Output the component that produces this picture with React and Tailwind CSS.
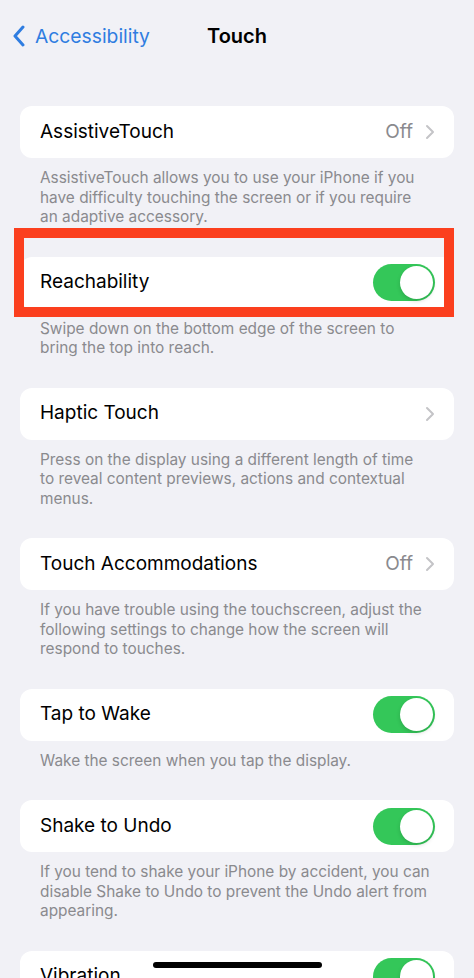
import React from "react";

// footers keep the same line breaks as the device renders them
const sections = [
  {
    title: "AssistiveTouch",
    value: "Off",
    chevron: true,
    footer: [
      "AssistiveTouch allows you to use your iPhone if you",
      "have difficulty touching the screen or if you require",
      "an adaptive accessory.",
    ],
  },
  {
    title: "Reachability",
    toggle: true,
    footer: ["Swipe down on the bottom edge of the screen to", "bring the top into reach."],
  },
  {
    title: "Haptic Touch",
    chevron: true,
    footer: [
      "Press on the display using a different length of time",
      "to reveal content previews, actions and contextual",
      "menus.",
    ],
  },
  {
    title: "Touch Accommodations",
    value: "Off",
    chevron: true,
    footer: [
      "If you have trouble using the touchscreen, adjust the",
      "following settings to change how the screen will",
      "respond to touches.",
    ],
  },
  {
    title: "Tap to Wake",
    toggle: true,
    footer: ["Wake the screen when you tap the display."],
  },
  {
    title: "Shake to Undo",
    toggle: true,
    footer: [
      "If you tend to shake your iPhone by accident, you can",
      "disable Shake to Undo to prevent the Undo alert from",
      "appearing.",
    ],
  },
  {
    title: "Vibration",
    toggle: true,
    footer: [],
  },
];

const Chevron = () => (
  <svg width="10" height="16" viewBox="0 0 10 16" fill="none" className="ml-[12px]">
    <polyline points="2,2 8,8 2,14" stroke="#c4c4c7" strokeWidth="2" strokeLinecap="round" strokeLinejoin="round" />
  </svg>
);

const Toggle = () => (
  <div className="w-[62px] h-[37px] rounded-full bg-[#34c759] flex items-center justify-end p-[2px]">
    <div className="w-[33px] h-[33px] rounded-full bg-white shadow-[0_2px_4px_rgba(0,0,0,0.15)]" />
  </div>
);

const Row = ({ s }) => (
  <div className="mx-[20px] h-[52px] rounded-[12px] bg-white flex items-center pl-[20px] pr-[19px]">
    <span className="flex-1 text-[19px] text-black">{s.title}</span>
    {s.value && <span className="text-[19px] text-[#8a8a8e]">{s.value}</span>}
    {s.chevron && <Chevron />}
    {s.toggle && <Toggle />}
  </div>
);

export default function App() {
  return (
    <div
      className="relative w-[474px] h-[978px] overflow-hidden bg-[#f1f1f6]"
      style={{ fontFamily: "Inter, 'Liberation Sans', sans-serif" }}
    >
      {/* nav bar */}
      <div className="relative h-[74px] flex items-center">
        <div className="flex items-center pl-[12px] pb-[2px]">
          <svg width="14" height="22" viewBox="0 0 14 22" fill="none">
            <polyline points="11,2 3,11 11,20" stroke="#2f7de1" strokeWidth="3" strokeLinecap="round" strokeLinejoin="round" />
          </svg>
          <span className="ml-[9px] text-[19.3px] text-[#2f7de1]">Accessibility</span>
        </div>
        <div className="absolute inset-x-0 text-center text-[20px] font-semibold text-black pointer-events-none pb-[2px]">
          Touch
        </div>
      </div>

      <div className="pt-[32px]">
        {sections.map((s, i) => (
          <div key={i}>
            <Row s={s} />
            {s.footer.length > 0 && (
              <div className="pl-[40px] pt-[10px] pb-[30px] text-[15.4px] leading-[19.5px] text-[#8a8a8e]">
                {s.footer.map((line, j) => (
                  <p key={j} className="whitespace-nowrap">{line}</p>
                ))}
              </div>
            )}
          </div>
        ))}
      </div>

      {/* highlight around Reachability */}
      <div className="absolute left-[14px] top-[228px] w-[440px] h-[89px] border-[10px] border-[#fb3f1e]" />

      {/* home indicator */}
      <div className="absolute left-[153px] top-[962px] w-[169px] h-[6px] rounded-full bg-black" />
    </div>
  );
}
